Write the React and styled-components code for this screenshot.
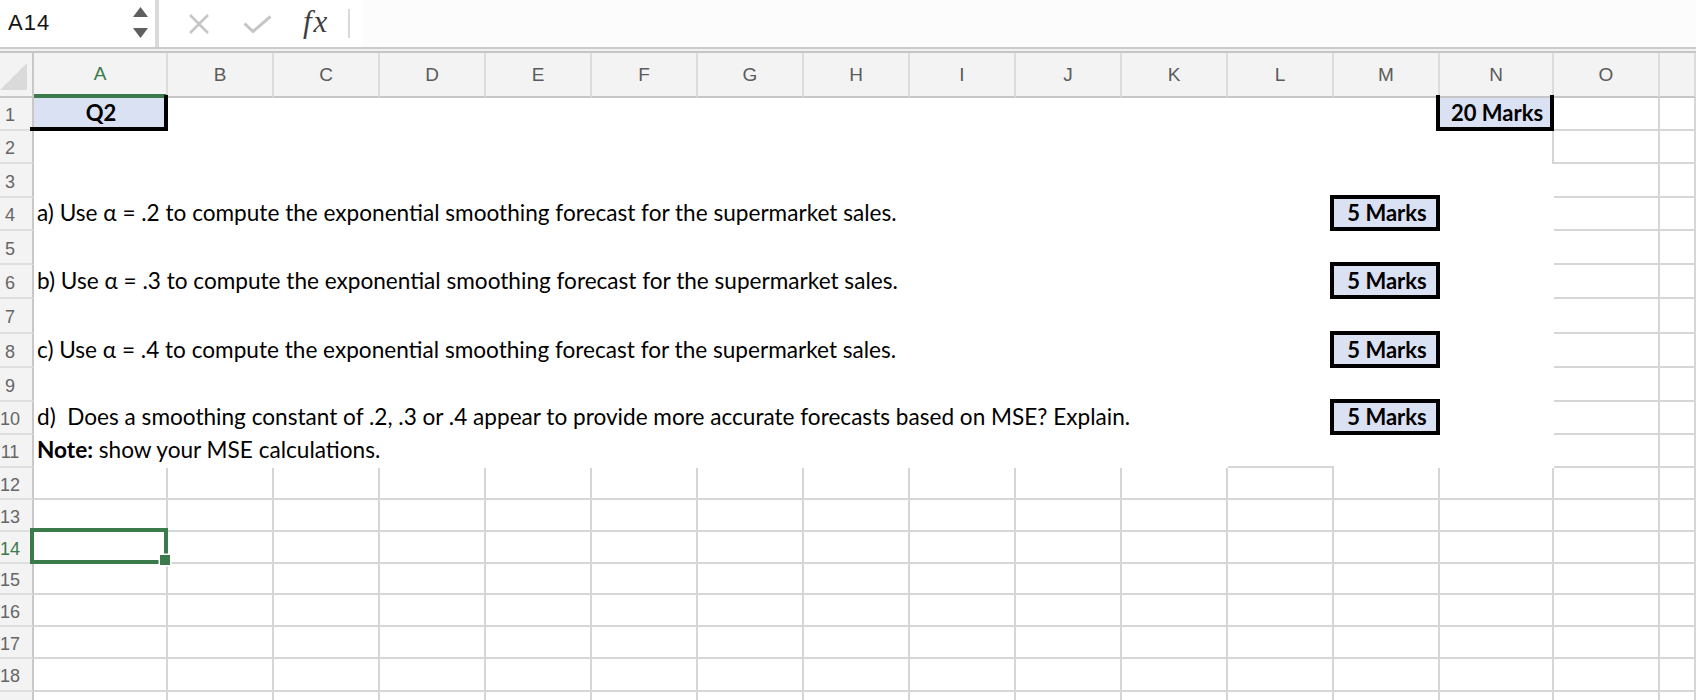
import React from 'react';
import styled, { createGlobalStyle } from 'styled-components';

const GREEN = '#3a7a4b';
const GRID = '#d6d6d6';
const FILL = '#d9e1f2';

const Global = createGlobalStyle`
  html, body { margin: 0; padding: 0; background: #fff; }
  body { width: 1696px; height: 700px; overflow: hidden; font-family: Lato, "Liberation Sans", sans-serif; }
  #root { width: 1696px; height: 700px; overflow: hidden; }
`;

const Page = styled.div`
  width: 1696px;
  height: 700px;
  overflow: hidden;
  display: flex;
  flex-direction: column;
  background: #fff;
`;

/* ---------- formula toolbar ---------- */
const Toolbar = styled.div`
  flex: 0 0 49px;
  height: 49px;
  box-sizing: border-box;
  display: flex;
  align-items: center;
  background: #fff;
  border-bottom: 2px solid #cbcbcb;
`;

const ToolbarRule = styled.div`
  flex: 0 0 4px;
  height: 4px;
  box-sizing: border-box;
  background: #f1f1f1;
  border-bottom: 2px solid #c6c6c6;
`;

const NameBox = styled.div`
  width: 155px;
  height: 100%;
  box-sizing: border-box;
  display: flex;
  align-items: center;
  justify-content: space-between;
  padding: 0 7px 0 8px;
`;

const NameText = styled.span`
  font-family: "Liberation Sans", Arial, sans-serif;
  font-size: 22px;
  letter-spacing: 1px;
  color: #141414;
  margin-top: -2px;
`;

const Spinner = styled.div`
  display: flex;
  flex-direction: column;
  gap: 11px;
  align-self: flex-start;
  margin-top: 7px;
`;

const ToolSep = styled.div`
  width: 4px;
  height: 100%;
  background: #dadada;
`;

const FormulaTools = styled.div`
  display: flex;
  align-items: center;
  height: 100%;
  padding-left: 29px;
`;

const IconSlot = styled.div`
  display: flex;
  align-items: center;
  margin-right: ${(p) => p.$gap}px;
  margin-top: ${(p) => p.$dy || 0}px;
`;

const Fx = styled.span`
  width: 30px;
  font-family: "Liberation Serif", "Times New Roman", serif;
  font-style: italic;
  font-size: 31px;
  letter-spacing: 2px;
  color: #3f3f3f;
  line-height: 1;
  margin-top: -4px;
`;

const FormulaSep = styled.div`
  width: 2px;
  height: 29px;
  background: #d9d9d9;
  margin-left: 15px;
`;

const FormulaInput = styled.div`
  flex: 1;
  height: 100%;
  margin-left: 13px;
  background: #fcfcfc;
`;

/* ---------- sheet ---------- */
const Sheet = styled.div`
  flex: 1;
  display: flex;
  flex-direction: column;
  overflow: hidden;
`;

const HeaderRow = styled.div`
  display: flex;
  flex: 0 0 45px;
  height: 45px;
  background: #f3f3f3;
`;

const Corner = styled.div`
  flex: 0 0 34px;
  width: 34px;
  box-sizing: border-box;
  border-right: 2px solid #c8c8c8;
  border-bottom: 2px solid #c6c6c6;
  display: flex;
  align-items: flex-end;
  justify-content: flex-end;
  padding: 0 5px 6px 0;
`;

const ColHead = styled.div`
  flex: 0 0 ${(p) => p.$w}px;
  width: ${(p) => p.$w}px;
  box-sizing: border-box;
  border-right: 2px solid #dcdcdc;
  border-bottom: ${(p) => (p.$active ? `4px solid ${GREEN}` : '2px solid #c6c6c6')};
  display: flex;
  align-items: center;
  justify-content: center;
  font-family: "Liberation Sans", Arial, sans-serif;
  font-size: 19px;
  color: ${(p) => (p.$active ? GREEN : '#5b5b5b')};
`;

const Row = styled.div`
  display: flex;
  flex: 0 0 ${(p) => p.$h}px;
  height: ${(p) => p.$h}px;
`;

const RowHead = styled.div`
  flex: 0 0 34px;
  width: 34px;
  box-sizing: border-box;
  background: #f3f3f3;
  border-right: 2px solid #c8c8c8;
  border-bottom: 2px solid #dfdfdf;
  display: flex;
  align-items: center;
  padding-top: 4px;
  overflow: hidden;
  font-family: "Liberation Sans", Arial, sans-serif;
  font-size: 18px;
  color: ${(p) => (p.$active ? GREEN : '#666')};
`;

const RowNum = styled.span`
  flex: 0 0 20px;
  width: 20px;
  text-align: center;
  white-space: nowrap;
  display: flex;
  justify-content: center;
`;

const Cell = styled.div`
  position: relative;
  flex: 0 0 ${(p) => p.$w}px;
  width: ${(p) => p.$w}px;
  box-sizing: border-box;
  border-right: ${(p) => (p.$noR ? 'none' : `2px solid ${GRID}`)};
  border-bottom: ${(p) => (p.$noB ? 'none' : `2px solid ${GRID}`)};
  background: ${(p) => (p.$fill ? FILL : 'transparent')};
  display: flex;
  align-items: flex-end;
  justify-content: ${(p) => (p.$center ? 'center' : 'flex-start')};
  padding: 0 0 5px ${(p) => (p.$center ? 0 : 3)}px;
`;

const CellText = styled.span`
  font-family: Lato, "Liberation Sans", sans-serif;
  font-size: ${(p) => (p.$bold ? 22 : 22.6)}px;
  font-weight: ${(p) => (p.$bold ? 700 : 400)};
  color: #000;
  white-space: pre;
  line-height: normal;
`;

const Strong = styled.b`
  font-weight: 700;
`;

const Frame = styled.div`
  position: absolute;
  z-index: 1;
  top: -3px;
  left: -4px;
  right: 0;
  bottom: 0;
  border: 4px solid #000;
  border-top: ${(p) => (p.$noTop ? 'none' : '4px solid #000')};
  border-left: ${(p) => (p.$noLeft ? 'none' : '4px solid #000')};
  pointer-events: none;
`;

const Selection = styled.div`
  position: absolute;
  z-index: 2;
  top: -4px;
  left: -4px;
  right: -2px;
  bottom: -2px;
  border: 4px solid ${GREEN};
  box-sizing: border-box;
`;

const Handle = styled.div`
  position: absolute;
  z-index: 3;
  right: -4px;
  bottom: -3px;
  width: 10px;
  height: 10px;
  background: ${GREEN};
  box-shadow: 0 0 0 1.5px #fff;
`;

/* columns: the last one (P) runs past the window edge, its label is off-screen */
const COLS = [
  ['A', 134], ['B', 106], ['C', 106], ['D', 106], ['E', 106], ['F', 106],
  ['G', 106], ['H', 106], ['I', 106], ['J', 106], ['K', 106], ['L', 106],
  ['M', 106], ['N', 114], ['O', 106], ['P', 36],
];
const VISIBLE_LABELS = 15;

/* heights of rows 1..18, then a partial row 19 at the window bottom */
const ROW_H = [33, 33, 34, 33, 34, 34, 35, 34, 34, 33, 33, 32, 32, 32, 31, 32, 32, 33, 32];
const LABELLED_ROWS = 18;

const QUESTIONS = {
  4: 'a) Use α = .2 to compute the exponential smoothing forecast for the supermarket sales.',
  6: 'b) Use α = .3 to compute the exponential smoothing forecast for the supermarket sales.',
  8: 'c) Use α = .4 to compute the exponential smoothing forecast for the supermarket sales.',
  10: 'd)  Does a smoothing constant of .2, .3 or .4 appear to provide more accurate forecasts based on MSE? Explain.',
};

const ACTIVE_ROW = 14;
const ACTIVE_COL = 'A';

function CloseIcon() {
  return (
    <svg width="22" height="20" viewBox="0 0 22 20">
      <path d="M2 1 L20 19 M20 1 L2 19" stroke="#c6c6c6" strokeWidth="2.6" fill="none" />
    </svg>
  );
}

function CheckIcon() {
  return (
    <svg width="29" height="18" viewBox="0 0 29 18">
      <path d="M1.5 8.5 L10 16.5 L27.5 1.5" stroke="#c6c6c6" strokeWidth="3" fill="none" />
    </svg>
  );
}

function Arrow({ down }) {
  return (
    <svg width="15" height="10" viewBox="0 0 15 10">
      {down ? <path d="M0 0 H15 L7.5 10 Z" fill="#5f5f5f" /> : <path d="M0 10 H15 L7.5 0 Z" fill="#5f5f5f" />}
    </svg>
  );
}

function renderContent(r, key) {
  if (r === 1 && key === 'A') {
    return (
      <>
        <Frame $noTop $noLeft />
        <CellText $bold>Q2</CellText>
      </>
    );
  }
  if (r === 1 && key === 'N') {
    return (
      <>
        <Frame $noTop />
        <CellText $bold>20 Marks</CellText>
      </>
    );
  }
  if (QUESTIONS[r] && key === 'M') {
    return (
      <>
        <Frame />
        <CellText $bold>5 Marks</CellText>
      </>
    );
  }
  if (QUESTIONS[r] && key === 'A') {
    return <CellText>{QUESTIONS[r]}</CellText>;
  }
  if (r === 11 && key === 'A') {
    return (
      <CellText>
        <Strong>Note:</Strong> show your MSE calculations.
      </CellText>
    );
  }
  if (r === ACTIVE_ROW && key === ACTIVE_COL) {
    return (
      <>
        <Selection />
        <Handle />
      </>
    );
  }
  return null;
}

function SheetRow({ r, h }) {
  return (
    <Row $h={h}>
      <RowHead $active={r === ACTIVE_ROW}>
        <RowNum>{r <= LABELLED_ROWS ? r : ''}</RowNum>
      </RowHead>
      {COLS.map(([key, w], ci) => {
        const white = r <= 11 && ci <= 13;
        const noR = white && !(r === 2 && key === 'N');
        const noB = white && !(r === 11 && key === 'L');
        const fill = (r === 1 && (key === 'A' || key === 'N')) || (QUESTIONS[r] && key === 'M');
        return (
          <Cell key={key} $w={w} $noR={noR} $noB={noB} $fill={!!fill} $center={!!fill}>
            {renderContent(r, key)}
          </Cell>
        );
      })}
    </Row>
  );
}

export default function App() {
  return (
    <>
      <Global />
      <Page>
        <Toolbar>
          <NameBox>
            <NameText>A14</NameText>
            <Spinner>
              <Arrow />
              <Arrow down />
            </Spinner>
          </NameBox>
          <ToolSep />
          <FormulaTools>
            <IconSlot $gap={33}>
              <CloseIcon />
            </IconSlot>
            <IconSlot $gap={31} $dy={1}>
              <CheckIcon />
            </IconSlot>
            <Fx>fx</Fx>
            <FormulaSep />
          </FormulaTools>
          <FormulaInput />
        </Toolbar>
        <ToolbarRule />
        <Sheet>
          <HeaderRow>
            <Corner>
              <svg width="27" height="27" viewBox="0 0 27 27">
                <path d="M0 27 L27 0 L27 27 Z" fill="#dadada" />
              </svg>
            </Corner>
            {COLS.map(([key, w], ci) => (
              <ColHead key={key} $w={w} $active={key === ACTIVE_COL}>
                {ci < VISIBLE_LABELS ? key : ''}
              </ColHead>
            ))}
          </HeaderRow>
          {ROW_H.map((h, i) => (
            <SheetRow key={i} r={i + 1} h={h} />
          ))}
        </Sheet>
      </Page>
    </>
  );
}
